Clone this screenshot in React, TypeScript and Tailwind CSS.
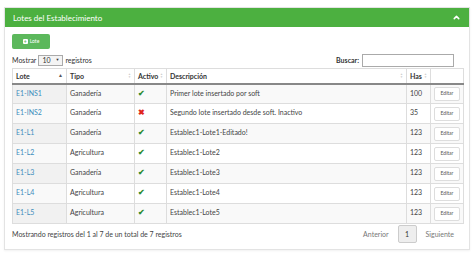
import { ChevronUp } from 'lucide-react';

interface Lote {
  codigo: string;
  tipo: string;
  activo: boolean;
  descripcion: string;
  has: number;
}

const lotes: Lote[] = [
  { codigo: 'E1-INS1', tipo: 'Ganadería', activo: true, descripcion: 'Primer lote insertado por soft', has: 100 },
  { codigo: 'E1-INS2', tipo: 'Ganadería', activo: false, descripcion: 'Segundo lote insertado desde soft. Inactivo', has: 35 },
  { codigo: 'E1-L1', tipo: 'Ganadería', activo: true, descripcion: 'Establec1-Lote1-Editado!', has: 123 },
  { codigo: 'E1-L2', tipo: 'Agricultura', activo: true, descripcion: 'Establec1-Lote2', has: 123 },
  { codigo: 'E1-L3', tipo: 'Ganadería', activo: true, descripcion: 'Establec1-Lote3', has: 123 },
  { codigo: 'E1-L4', tipo: 'Agricultura', activo: true, descripcion: 'Establec1-Lote4', has: 123 },
  { codigo: 'E1-L5', tipo: 'Agricultura', activo: true, descripcion: 'Establec1-Lote5', has: 123 },
];

function SortIcon({ active }: { active?: boolean }) {
  if (active) {
    return <span className="text-[5px] leading-none text-[#555]">▲</span>;
  }
  return (
    <span className="flex flex-col text-[3px] leading-[3px] text-[#ccc]">
      <span>▲</span>
      <span>▼</span>
    </span>
  );
}

function Th({ label, active, last }: { label?: string; active?: boolean; last?: boolean }) {
  return (
    <th className="border-r border-[#ddd] px-[3px] text-left align-middle font-bold last:border-r-0">
      {label && (
        <div className="flex items-center justify-between">
          <span>{label}</span>
          {!last && <SortIcon active={active} />}
        </div>
      )}
    </th>
  );
}

export default function App() {
  return (
    <div className="h-[274px] w-[474px] bg-white pt-[7px] pl-[4px] font-['Lato','Liberation_Sans',sans-serif] text-[#333]">
      <div className="w-[466px] border border-[#e3e3e3] shadow-[0_1px_2px_rgba(0,0,0,0.06)]">
        <div className="flex h-[19px] items-center justify-between bg-[#4cb040] px-[8px] text-white">
          <span className="text-[8px]">Lotes del Establecimiento</span>
          <ChevronUp className="h-[9px] w-[9px]" strokeWidth={4} />
        </div>

        <div className="px-[7px] pt-[7px] pb-[6px]">
          <button className="flex h-[15px] w-[38px] items-center justify-center gap-[2px] rounded-[2px] bg-[#5cb85c] text-[5px] text-white">
            <span className="flex h-[5px] w-[5px] items-center justify-center rounded-[1px] bg-white text-[5px] font-bold leading-none text-[#5cb85c]">+</span>
            Lote
          </button>

          <div className="mt-[4px] flex h-[14px] items-center justify-between text-[7px]">
            <div className="flex items-center gap-[2px]">
              <span>Mostrar</span>
              <span className="flex h-[11px] w-[25px] items-center justify-between border border-[#aaa] bg-[#f4f4f4] px-[3px] text-[7px]">
                10 <span className="text-[4px]">▼</span>
              </span>
              <span>registros</span>
            </div>
            <div className="flex items-center gap-[3px] pr-[8px]">
              <span className="font-bold">Buscar:</span>
              <span className="h-[13px] w-[92px] border border-[#aaa] bg-white" />
            </div>
          </div>

          <table className="mt-[1px] w-[451px] table-fixed border-collapse border border-[#ddd] text-[7px]">
            <colgroup>
              <col className="w-[54px]" />
              <col className="w-[68px]" />
              <col className="w-[32px]" />
              <col className="w-[240px]" />
              <col className="w-[24px]" />
              <col className="w-[33px]" />
            </colgroup>
            <thead>
              <tr className="h-[15px] border-b-2 border-[#888]">
                <Th label="Lote" active />
                <Th label="Tipo" />
                <Th label="Activo" />
                <Th label="Descripción" />
                <Th label="Has" />
                <Th last />
              </tr>
            </thead>
            <tbody>
              {lotes.map((lote, i) => (
                <tr
                  key={lote.codigo}
                  className={`h-[20px] border-b border-[#ddd] ${i % 2 === 0 ? 'bg-[#f9f9f9]' : 'bg-white'}`}
                >
                  <td className={`border-r border-[#ddd] px-[3px] pt-[3px] align-top text-[#3c8dbc] ${i % 2 === 0 ? 'bg-[#f1f1f1]' : 'bg-[#f9f9f9]'}`}>
                    {lote.codigo}
                  </td>
                  <td className="border-r border-[#ddd] px-[3px] pt-[3px] align-top text-[#444]">{lote.tipo}</td>
                  <td className="border-r border-[#ddd] px-[3px] pt-[3px] align-top">
                    {lote.activo ? (
                      <span className="text-[8px] font-bold leading-none text-[#2e8b2e]">✔</span>
                    ) : (
                      <span className="text-[8px] font-bold leading-none text-[#e0251b]">✖</span>
                    )}
                  </td>
                  <td className="border-r border-[#ddd] px-[3px] pt-[3px] align-top text-[#444]">{lote.descripcion}</td>
                  <td className="border-r border-[#ddd] px-[3px] pt-[3px] align-top text-[#444]">{lote.has}</td>
                  <td className="px-[3px] align-middle">
                    <button className="flex h-[14px] w-[26px] items-center justify-center rounded-[2px] border border-[#ddd] bg-white text-[5px] text-[#555]">
                      Editar
                    </button>
                  </td>
                </tr>
              ))}
            </tbody>
          </table>

          <div className="mt-[1px] flex items-center justify-between text-[7px]">
            <span className="text-[#444]">Mostrando registros del 1 al 7 de un total de 7 registros</span>
            <div className="flex items-center gap-[9px] pr-[8px] text-[#777]">
              <span>Anterior</span>
              <span className="flex h-[18px] w-[19px] items-center justify-center rounded-[2px] border border-[#ccc] bg-[#eee] text-[#333]">1</span>
              <span>Siguiente</span>
            </div>
          </div>
        </div>
      </div>
    </div>
  );
}
